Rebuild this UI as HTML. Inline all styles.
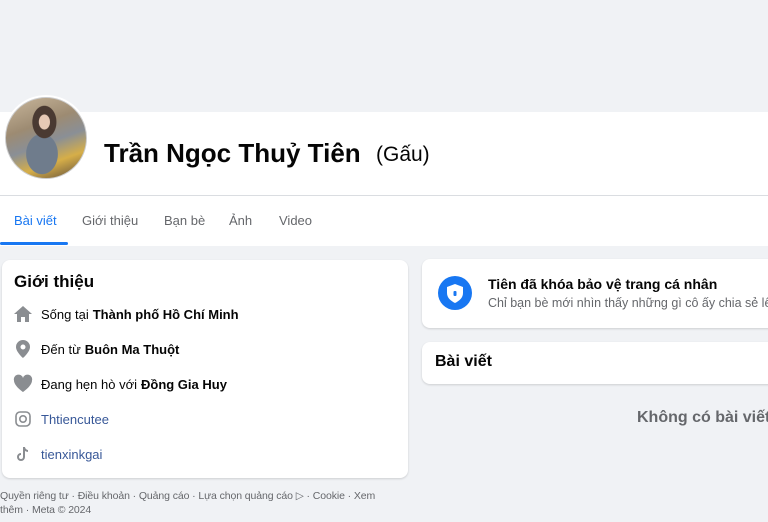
<!DOCTYPE html>
<html><head><meta charset="utf-8"><style>
*{margin:0;padding:0;box-sizing:border-box}
body{width:768px;height:522px;overflow:hidden;background:#f0f2f5;font-family:"Liberation Sans","DejaVu Sans",sans-serif;position:relative;color:#050505}
.abs{position:absolute}
.card{background:#fff;border-radius:8px;box-shadow:0 1px 2px rgba(0,0,0,.15)}
.row{position:absolute;left:13px;font-size:13px;color:#050505;display:flex;align-items:center}
.row svg{width:20px;height:20px;margin-right:8px}
.row b{font-weight:bold;margin-left:4px}
.tab{position:absolute;top:213px;font-size:13px;color:#65676b}
</style></head><body>
<div class="abs" style="left:0;top:112px;width:768px;height:134px;background:#fff"></div>
<div class="abs" style="left:0;top:195px;width:768px;height:1px;background:#dadde1"></div>
<div class="abs" style="left:3px;top:95px;width:86px;height:86px;border-radius:50%;background:#fff;padding:2px">
<div style="width:82px;height:82px;border-radius:50%;background:radial-gradient(ellipse at 48% 30%,#e6c9b5 0 9%,#4a3a32 10% 20%,transparent 21%),radial-gradient(ellipse at 45% 70%,#6f7c8c 0 25%,transparent 26%),linear-gradient(160deg,#c9b79c 0%,#9d8b72 35%,#8a8f96 55%,#d6ae48 75%,#5a4a3c 100%);border:1px solid #ccc"></div></div>
<div class="abs" style="left:104px;top:138px;font-size:26px;font-weight:bold;color:#050505">Trần Ngọc Thuỷ Tiên</div>
<div class="abs" style="left:376px;top:143px;font-size:21px;color:#050505">(Gấu)</div>
<div class="tab" style="left:14px;color:#1877f2">Bài viết</div>
<div class="tab" style="left:82px">Giới thiệu</div>
<div class="tab" style="left:164px">Bạn bè</div>
<div class="tab" style="left:229px">Ảnh</div>
<div class="tab" style="left:279px">Video</div>
<div class="abs" style="left:0;top:242px;width:68px;height:3px;background:#1877f2;border-radius:2px"></div>

<div class="card abs" style="left:2px;top:260px;width:406px;height:218px"></div>
<div class="abs" style="left:14px;top:272px;font-size:17px;font-weight:bold">Giới thiệu</div>
<div class="row" style="top:304px"><svg viewBox="0 0 20 20"><path d="M10 2 1 10h3v8h4v-5h4v5h4v-8h3z" fill="#8a8d91"/></svg>Sống tại<b>Thành phố Hồ Chí Minh</b></div>
<div class="row" style="top:339px"><svg viewBox="0 0 20 20"><path d="M10 1a7 7 0 0 0-7 7c0 5 7 11 7 11s7-6 7-11a7 7 0 0 0-7-7zm0 9.5a2.5 2.5 0 1 1 0-5 2.5 2.5 0 0 1 0 5z" fill="#8a8d91"/></svg>Đến từ<b>Buôn Ma Thuột</b></div>
<div class="row" style="top:374px"><svg viewBox="0 0 20 20"><path d="M10 18S1 12 1 6.5A4.5 4.5 0 0 1 10 4a4.5 4.5 0 0 1 9 2.5C19 12 10 18 10 18z" fill="#8a8d91"/></svg>Đang hẹn hò với<b>Đồng Gia Huy</b></div>
<div class="row" style="top:409px;color:#385898"><svg viewBox="0 0 20 20"><rect x="3" y="3" width="14" height="14" rx="4" fill="none" stroke="#8a8d91" stroke-width="1.6"/><circle cx="10" cy="10" r="3.2" fill="none" stroke="#8a8d91" stroke-width="1.6"/></svg>Thtiencutee</div>
<div class="row" style="top:444px;color:#385898"><svg viewBox="0 0 20 20"><path d="M11 3v10a3 3 0 1 1-3-3M11 3c0 2 2 4 4 4" fill="none" stroke="#8a8d91" stroke-width="2"/></svg>tienxinkgai</div>
<div class="abs" style="left:0;top:489px;font-size:10.5px;color:#65676b;line-height:14px;white-space:nowrap;letter-spacing:-0.1px">Quyền riêng tư · Điều khoản · Quảng cáo · Lựa chọn quảng cáo ▷ · Cookie · Xem<br>thêm · Meta © 2024</div>

<div class="card abs" style="left:422px;top:259px;width:360px;height:69px"></div>
<div class="abs" style="left:438px;top:276px;width:34px;height:34px;border-radius:50%;background:#1877f2"><svg viewBox="0 0 34 34" width="34" height="34"><path d="M17 8l8 3v6c0 5-4 8-8 10-4-2-8-5-8-10v-6z" fill="#fff"/><rect x="15.5" y="15" width="3" height="5" rx="1" fill="#1877f2"/></svg></div>
<div class="abs" style="left:488px;top:276px;font-size:14px;font-weight:bold;color:#050505">Tiên đã khóa bảo vệ trang cá nhân</div>
<div class="abs" style="left:488px;top:296px;font-size:12.5px;color:#65676b;white-space:nowrap">Chỉ bạn bè mới nhìn thấy những gì cô ấy chia sẻ lên</div>
<div class="card abs" style="left:422px;top:342px;width:360px;height:42px"></div>
<div class="abs" style="left:435px;top:353px;font-size:16px;font-weight:bold">Bài viết</div>
<div class="abs" style="left:637px;top:409px;font-size:16px;font-weight:bold;color:#65676b;white-space:nowrap">Không có bài viết</div>
</body></html>
